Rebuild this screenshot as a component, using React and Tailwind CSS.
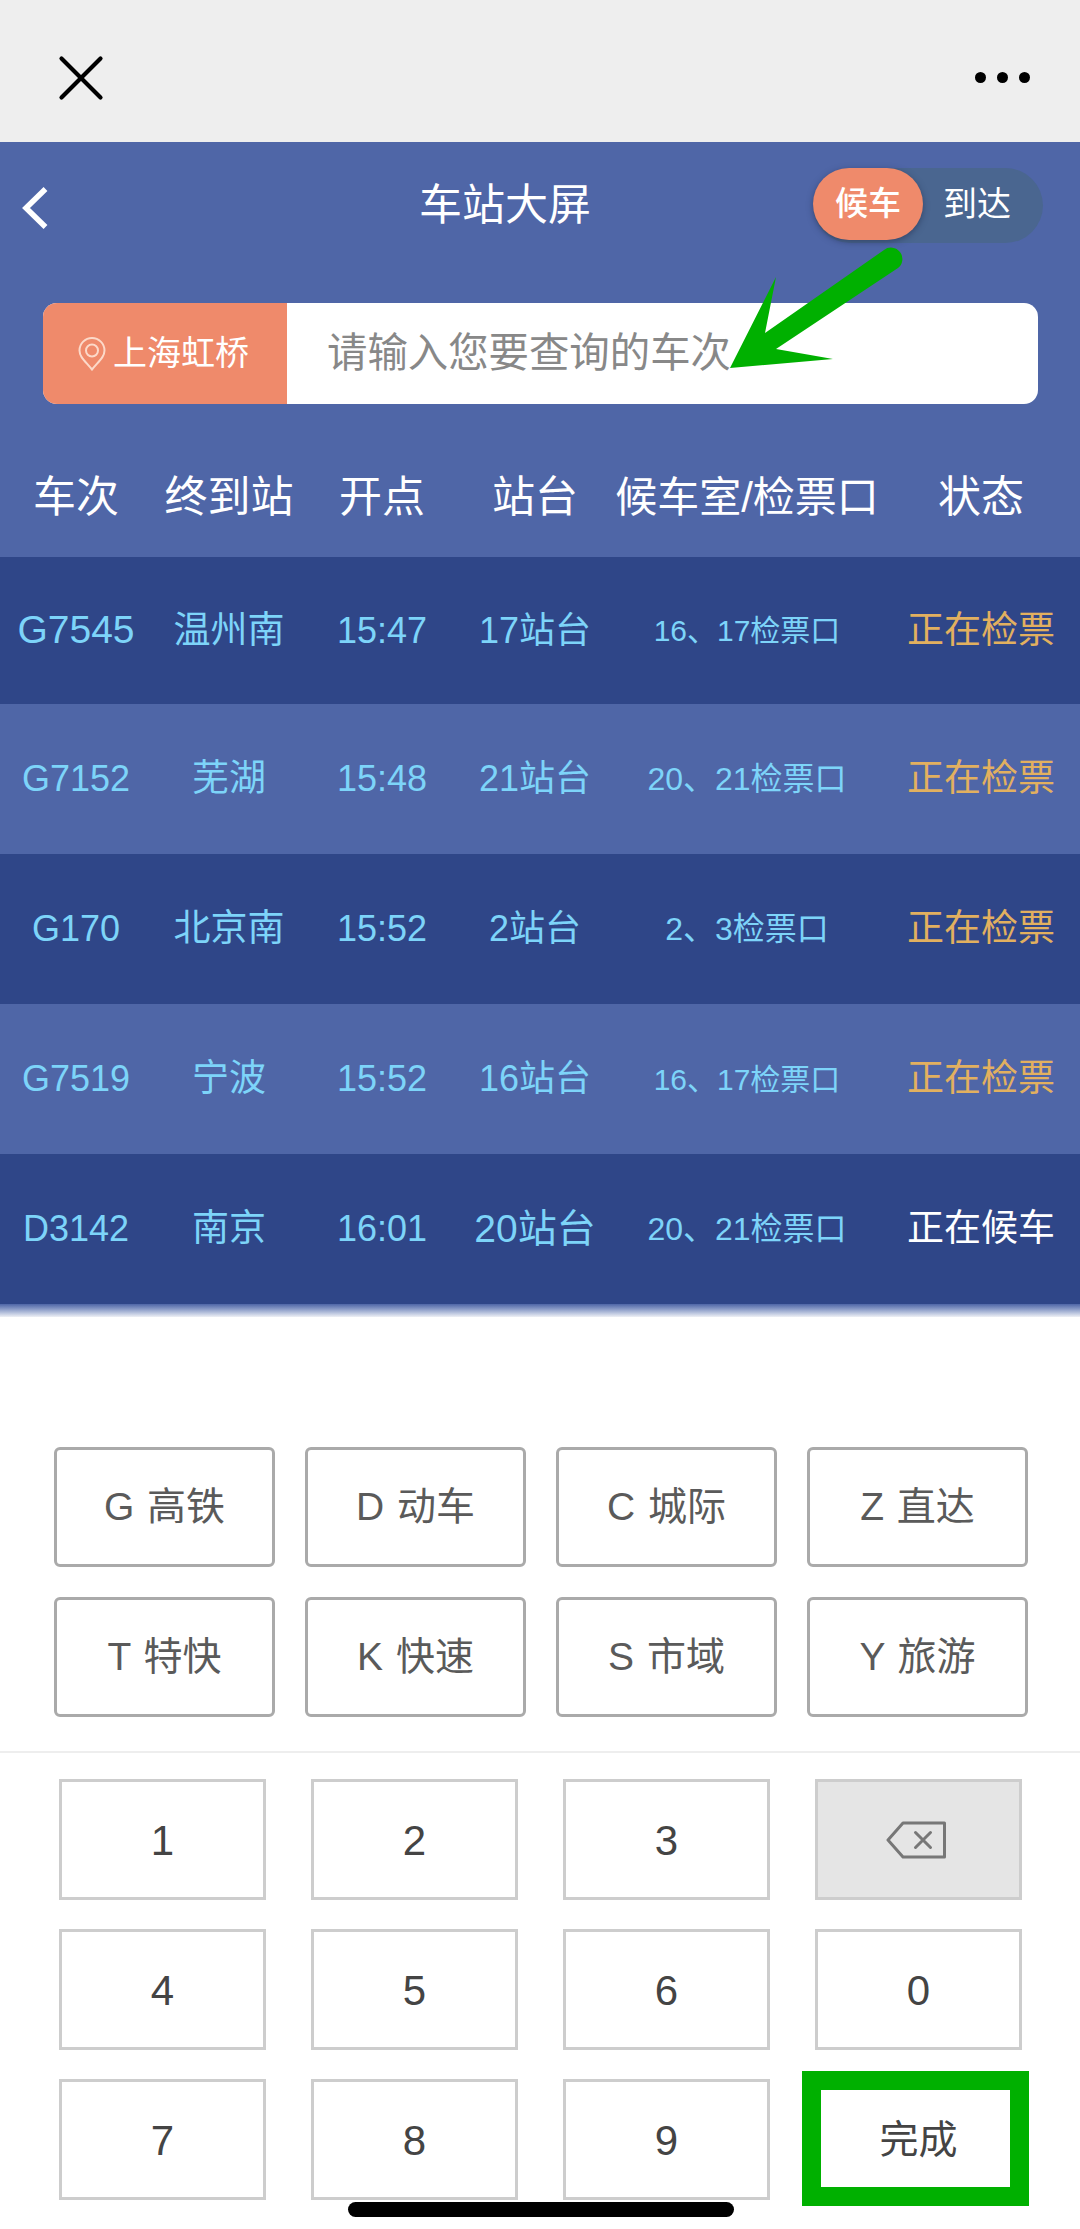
import { X } from "lucide-react";

const trains = [
  { no: "G7545", noSize: "text-[39px]", to: "温州南", time: "15:47", platform: "17站台", gate: "16、17检票口", gateSize: "text-[30px]", status: "正在检票" },
  { no: "G7152", to: "芜湖", time: "15:48", platform: "21站台", gate: "20、21检票口", status: "正在检票" },
  { no: "G170", to: "北京南", time: "15:52", platform: "2站台", gate: "2、3检票口", status: "正在检票" },
  { no: "G7519", to: "宁波", time: "15:52", platform: "16站台", gate: "16、17检票口", gateSize: "text-[30px]", status: "正在检票" },
  { no: "D3142", to: "南京", time: "16:01", platform: "20站台", platformSize: "text-[39px]", gate: "20、21检票口", status: "正在候车" },
];

const filters = ["G 高铁", "D 动车", "C 城际", "Z 直达", "T 特快", "K 快速", "S 市域", "Y 旅游"];

const columns = "grid grid-cols-[152px_154px_152px_154px_270px_198px] items-center text-center";

function TrainRow({ train, dark, first }) {
  return (
    <div className={`${columns} ${first ? "h-[147px]" : "h-[150px]"} text-[36px] text-[#7dd4f9] ${dark ? "bg-[#2f4688]" : "bg-[#4f66a7]"}`}>
      <span className={train.noSize}>{train.no}</span>
      <span className="text-[37px]">{train.to}</span>
      <span>{train.time}</span>
      <span className={train.platformSize}>{train.platform}</span>
      <span className={train.gateSize || "text-[32px]"}>{train.gate}</span>
      <span className={`text-[37px] ${train.status === "正在检票" ? "text-[#e2b05f]" : "text-white"}`}>{train.status}</span>
    </div>
  );
}

function Key({ children, gray }) {
  return (
    <div className={`relative flex h-[121px] items-center justify-center border-[3px] border-[#cdcdcd] pt-[1px] text-[42px] text-[#444] ${gray ? "bg-[#e5e5e5]" : "bg-white"}`}>
      {children}
    </div>
  );
}

export default function App() {
  return (
    <div className="relative h-[2229px] w-[1080px] overflow-hidden bg-white font-['Liberation_Sans','Noto_Sans_CJK_SC',sans-serif]">
      <div className="flex h-[142px] items-center justify-between bg-[#eeeeee] pl-[42px] pr-[50px] pt-[13px]">
        <X size={78} strokeWidth={1.3} className="text-black" />
        <div className="flex gap-[11px]">
          <span className="h-[11px] w-[11px] rounded-full bg-black" />
          <span className="h-[11px] w-[11px] rounded-full bg-black" />
          <span className="h-[11px] w-[11px] rounded-full bg-black" />
        </div>
      </div>

      <div className="bg-[#4f66a7]">
        <div className="flex h-[126px] items-center pl-[22px] pr-[37px]">
          <svg className="mt-[6px]" width="26" height="42" viewBox="0 0 26 42" fill="none" stroke="white" strokeWidth="5.5">
            <path d="M23.5 2 L4 21 L23.5 40" />
          </svg>
          <h1 className="ml-[371px] text-[43px] font-normal text-white">车站大屏</h1>
          <div className="ml-auto flex h-[75px] w-[230px] rounded-full bg-[#4a6690]">
            <div className="flex h-[72px] w-[110px] items-center justify-center rounded-full bg-[#ef8a6b] pt-[1px] text-[33px] font-medium text-white shadow-[0_2px_6px_rgba(30,40,70,0.5)]">
              候车
            </div>
            <div className="flex h-[72px] flex-1 items-center justify-center pr-[12px] pt-[1px] text-[34px] text-white">到达</div>
          </div>
        </div>

        <div className="mx-[43px] mt-[35px] flex h-[101px] w-[995px] overflow-hidden rounded-[14px] bg-white">
          <div className="flex w-[244px] items-center gap-[7px] bg-[#ef8a6b] pl-[35px] text-[34px] text-white">
            <svg width="28" height="34" viewBox="0 0 28 34" fill="none" stroke="#fcd9c9" strokeWidth="2">
              <path d="M14 32.5 C7 24 1.5 20 1.5 13.5 A12.5 12.5 0 0 1 26.5 13.5 C26.5 20 21 24 14 32.5 Z" />
              <circle cx="14" cy="13.5" r="6" />
            </svg>
            上海虹桥
          </div>
          <div className="flex flex-1 items-center pl-[40px] text-[40.4px] text-[#888]">请输入您要查询的车次</div>
        </div>

        <div className={`${columns} h-[153px] pt-[34px] text-[43px] text-white`}>
          <span>车次</span>
          <span>终到站</span>
          <span>开点</span>
          <span>站台</span>
          <span className="text-[42px]">候车室/检票口</span>
          <span>状态</span>
        </div>

        {trains.map((train, i) => (
          <TrainRow key={train.no} train={train} dark={i % 2 === 0} first={i === 0} />
        ))}
      </div>
      <div className="h-[13px] bg-gradient-to-b from-[#4f66a7] to-[#eef0f5]" />

      <div className="grid grid-cols-[repeat(4,221px)] gap-[30px] pl-[54px] pt-[130px]">
        {filters.map((label) => (
          <div
            key={label}
            className="flex h-[120px] items-center justify-center rounded-[6px] border-[3px] border-[#aaa] text-[39px] text-[#5a5a5a] [word-spacing:2px]"
          >
            {label}
          </div>
        ))}
      </div>

      <div className="mt-[34px] h-[2px] bg-[#eee]" />

      <div className="grid grid-cols-[repeat(4,207px)] gap-x-[45px] gap-y-[29px] pl-[59px] pt-[26px]">
        {["1", "2", "3"].map((n) => (
          <Key key={n}>{n}</Key>
        ))}
        <Key gray>
          <svg className="mr-[5px]" width="60" height="38" viewBox="0 0 60 38" fill="none" stroke="#777" strokeWidth="3" strokeLinejoin="round" strokeLinecap="round">
            <path d="M17 2 H58.5 V36 H17 L2 19 Z" />
            <path d="M29.5 11.5 L44.5 26.5 M44.5 11.5 L29.5 26.5" />
          </svg>
        </Key>
        {["4", "5", "6", "0", "7", "8", "9"].map((n) => (
          <Key key={n}>{n}</Key>
        ))}
        <Key>
          <span className="text-[39px]">完成</span>
          <div className="absolute -bottom-[9px] -left-[16px] -right-[10px] -top-[11px] border-[19px] border-[#00b000]" />
        </Key>
      </div>

      {/* annotation arrow, sits over the search box */}
      <svg className="absolute left-0 top-0" width="1080" height="420" viewBox="0 0 1080 420" fill="none">
        <path
          d="M730 368 L776 277 L765 333 L884 250 A11.4 11.4 0 0 1 898 268 L776 349 L833 359 Z"
          fill="#00b000"
        />
      </svg>

      <div className="absolute bottom-[12px] left-[348px] h-[15px] w-[386px] rounded-full bg-black" />
    </div>
  );
}
